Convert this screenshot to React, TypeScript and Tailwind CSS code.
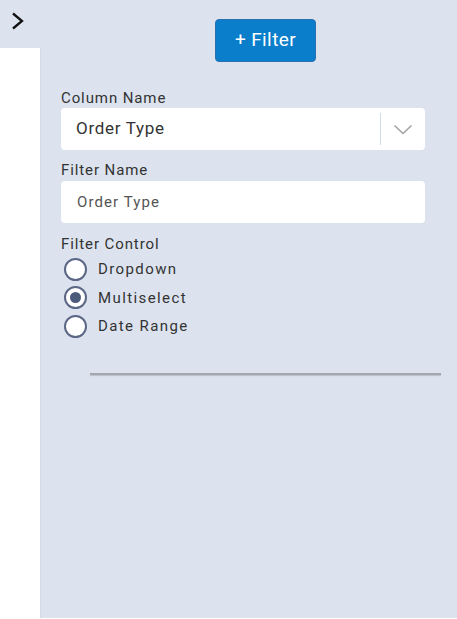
import React from "react";

function Radio({ label, checked }: { label: string; checked?: boolean }) {
  return (
    <div className="flex items-center h-[28.5px]">
      <div className="ml-[3px] w-[23px] h-[23px] shrink-0 rounded-full border-2 border-[#5b6784] bg-white flex items-center justify-center">
        {checked && <div className="w-[11px] h-[11px] rounded-full bg-[#4c5a7a]" />}
      </div>
      <span className="ml-[11px] text-[15px] tracking-[1.4px] text-[#333]">{label}</span>
    </div>
  );
}

export default function App() {
  return (
    <div
      className="w-[457px] h-[618px] bg-[#dce3ef] flex"
      style={{ fontFamily: "Roboto, 'Noto Sans', sans-serif" }}
    >
      <div className="w-[41px] shrink-0 flex flex-col">
        <div className="h-[48px] pl-[11px] pt-[12px]">
          <svg width="13" height="18" viewBox="0 0 13 18">
            <path d="M2 1.5 L11 9 L2 16.5" fill="none" stroke="#111" strokeWidth="2.3" />
          </svg>
        </div>
        <div className="flex-1 bg-white border-r border-[#d3dbea]" />
      </div>
      <div className="flex-1 min-w-0 pl-[20px] pr-[32px] flex flex-col">
        <button className="mt-[19px] ml-[154px] w-[101px] h-[43px] rounded-[4px] bg-[#0a7ecb] border border-[#2a70b0] text-white text-[19px] tracking-[0.4px] flex items-center justify-center">
          + Filter
        </button>
        <div className="mt-[26px] text-[15px] leading-[20px] tracking-[0.9px] text-[#333]">Column Name</div>
        <div className="h-[42px] bg-white rounded-[4px] flex items-center">
          <span className="flex-1 pl-[15px] text-[17px] tracking-[0.7px] text-[#333]">Order Type</span>
          <div className="w-px h-[32px] bg-[#d3dbea]" />
          <div className="w-[44px] flex justify-center">
            <svg width="20" height="11" viewBox="0 0 20 11">
              <path d="M1.5 1.5 L10 9.5 L18.5 1.5" fill="none" stroke="#a3a3a3" strokeWidth="1.6" />
            </svg>
          </div>
        </div>
        <div className="mt-[10px] text-[15px] leading-[20px] tracking-[0.9px] text-[#333]">Filter Name</div>
        <div className="mt-px h-[42px] bg-white rounded-[4px] flex items-center pl-[16px] text-[15px] tracking-[1.1px] text-[#555]">
          Order Type
        </div>
        <div className="mt-[11px] text-[15px] leading-[20px] tracking-[0.9px] text-[#333]">Filter Control</div>
        <div className="mt-[1px] flex flex-col">
          <Radio label="Dropdown" />
          <Radio label="Multiselect" checked />
          <Radio label="Date Range" />
        </div>
        <div className="mt-[32px] ml-[29px] w-[351px] shrink-0 h-[2px] bg-[#a4a7ad] shadow-[0_1px_1px_rgba(0,0,0,0.15)]" />
      </div>
    </div>
  );
}
